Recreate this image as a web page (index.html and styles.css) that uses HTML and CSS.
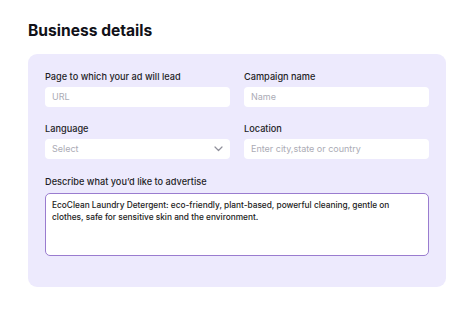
FILE: index.html
```html
<!DOCTYPE html>
<html>
<head>
<meta charset="utf-8">
<link rel="stylesheet" href="styles.css">
</head>
<body>
<div class="page">
  <h1 class="title">Business details</h1>
  <div class="panel">
    <div class="grid">
      <div class="field">
        <div class="label">Page to which your ad will lead</div>
        <div class="input placeholder">URL</div>
      </div>
      <div class="field">
        <div class="label">Campaign name</div>
        <div class="input placeholder">Name</div>
      </div>
      <div class="field">
        <div class="label">Language</div>
        <div class="input placeholder select">
          <span>Select</span>
          <svg class="chev" width="9" height="6" viewBox="0 0 9 6"><path d="M1 1l3.5 3.5L8 1" fill="none" stroke="#8f8f9a" stroke-width="1.2" stroke-linecap="round" stroke-linejoin="round"/></svg>
        </div>
      </div>
      <div class="field">
        <div class="label">Location</div>
        <div class="input placeholder">Enter city,state or country</div>
      </div>
      <div class="field wide">
        <div class="label">Describe what you’d like to advertise</div>
        <div class="textarea">EcoClean Laundry Detergent: eco-friendly, plant-based, powerful cleaning, gentle on clothes, safe for sensitive skin and the environment.</div>
      </div>
    </div>
  </div>
</div>
</body>
</html>
```
FILE: styles.css
```css
* { box-sizing: border-box; }
html, body { margin: 0; padding: 0; background: #ffffff; }
body { font-family: Inter, "Noto Sans", sans-serif; color: #1b1b22; }
.page { width: 474px; height: 316px; padding: 20px 28px 0 28px; }
.title { margin: 0; font-size: 15.6px; font-weight: 700; line-height: 22px; color: #111118; }
.panel { margin-top: 12px; width: 418px; height: 233px; background: #edeafd; border-radius: 9px; padding: 17px 17px 0 17px; }
.grid { display: grid; grid-template-columns: 185px 185px; column-gap: 14px; row-gap: 16px; }
.wide { grid-column: 1 / 3; margin-top: 1px; }
.field { display: flex; flex-direction: column; gap: 4px; }
.label { font-size: 9.2px; font-weight: 500; line-height: 12px; color: #1e1e26; }
.input { height: 20px; background: #ffffff; border-radius: 4px; padding: 0 7px; font-size: 9px; line-height: 20px; display: flex; align-items: center; }
.placeholder { color: #ababb5; }
.select { justify-content: space-between; padding-right: 7px; }
.chev { display: block; }
.textarea { margin-top: 1px; height: 63px; background: #ffffff; border: 1px solid #9a7ccf; border-radius: 5px; padding: 5px 6px; font-size: 8.3px; font-weight: 500; line-height: 12px; color: #1b1b22; }
```
